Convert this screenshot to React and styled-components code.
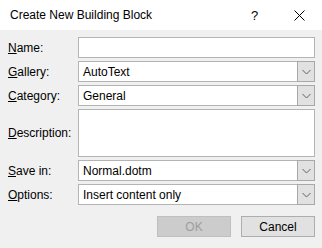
import React from "react";
import styled, { createGlobalStyle } from "styled-components";

const GlobalStyle = createGlobalStyle`
  html, body {
    margin: 0;
    padding: 0;
    background: #f0f0f0;
  }
  body {
    font-family: "Liberation Sans", Arial, sans-serif;
    font-size: 12px;
    color: #000;
  }
`;

const Dialog = styled.div`
  width: 322px;
  height: 248px;
  background: #f0f0f0;
  display: flex;
  flex-direction: column;
`;

const TitleBar = styled.div`
  height: 30px;
  background: #fff;
  display: flex;
  align-items: center;
  padding-left: 10px;
`;

const Title = styled.div`
  flex: 1;
  font-size: 12px;
  color: #000;
`;

const TitleButton = styled.div`
  width: 45px;
  height: 30px;
  display: flex;
  align-items: center;
  justify-content: center;
  font-size: 13px;
  color: #000;
`;

const Body = styled.div`
  padding: 7px 7px 0 8px;
  display: flex;
  flex-direction: column;
`;

const Form = styled.div`
  display: grid;
  grid-template-columns: 70px 1fr;
  row-gap: 3px;
  align-items: center;
`;

const Label = styled.label`
  font-size: 12px;
  color: #000;
`;

const Key = styled.span`
  text-decoration: underline;
  text-underline-offset: 1px;
`;

const Field = styled.div`
  height: ${(p) => p.$h || 21}px;
  box-sizing: border-box;
  border: 1px solid #b4b4b4;
  background: #fff;
  display: flex;
  align-items: center;
  padding-left: 4px;
  font-size: 12px;
`;

const Value = styled.span`
  flex: 1;
`;

const DropButton = styled.div`
  width: 18px;
  height: calc(100% + 2px);
  margin: -1px -1px -1px 0;
  box-sizing: border-box;
  border: 1px solid #a8a8a8;
  background: #e1e1e1;
  display: flex;
  align-items: center;
  justify-content: center;
`;

const Footer = styled.div`
  display: flex;
  justify-content: flex-end;
  gap: 10px;
  margin-top: 11px;
`;

const Button = styled.div`
  width: 74px;
  height: 21px;
  box-sizing: border-box;
  border: 1px solid ${(p) => (p.$disabled ? "#bfbfbf" : "#adadad")};
  background: ${(p) => (p.$disabled ? "#cccccc" : "#e1e1e1")};
  color: ${(p) => (p.$disabled ? "#9d9d9d" : "#000")};
  display: flex;
  align-items: center;
  justify-content: center;
  font-size: 12px;
`;

const Chevron = () => (
  <svg width="9" height="6" viewBox="0 0 9 6">
    <path d="M0.5 1 L4.5 5 L8.5 1" fill="none" stroke="#606060" strokeWidth="1" />
  </svg>
);

const Close = () => (
  <svg width="11" height="11" viewBox="0 0 11 11">
    <path d="M0.5 0.5 L10.5 10.5 M10.5 0.5 L0.5 10.5" stroke="#000" strokeWidth="1" />
  </svg>
);

const rows = [
  { key: "N", rest: "ame:", value: "", drop: false },
  { key: "G", rest: "allery:", value: "AutoText", drop: true },
  { key: "C", rest: "ategory:", value: "General", drop: true },
  { key: "D", rest: "escription:", value: "", drop: false, h: 48 },
  { key: "S", rest: "ave in:", value: "Normal.dotm", drop: true },
  { key: "O", rest: "ptions:", value: "Insert content only", drop: true },
];

export default function App() {
  return (
    <>
      <GlobalStyle />
      <Dialog>
        <TitleBar>
          <Title>Create New Building Block</Title>
          <TitleButton>?</TitleButton>
          <TitleButton>
            <Close />
          </TitleButton>
        </TitleBar>
        <Body>
          <Form>
            {rows.map((r) => (
              <React.Fragment key={r.key}>
                <Label>
                  <Key>{r.key}</Key>
                  {r.rest}
                </Label>
                <Field $h={r.h}>
                  <Value>{r.value}</Value>
                  {r.drop && (
                    <DropButton>
                      <Chevron />
                    </DropButton>
                  )}
                </Field>
              </React.Fragment>
            ))}
          </Form>
          <Footer>
            <Button $disabled>OK</Button>
            <Button>Cancel</Button>
          </Footer>
        </Body>
      </Dialog>
    </>
  );
}
